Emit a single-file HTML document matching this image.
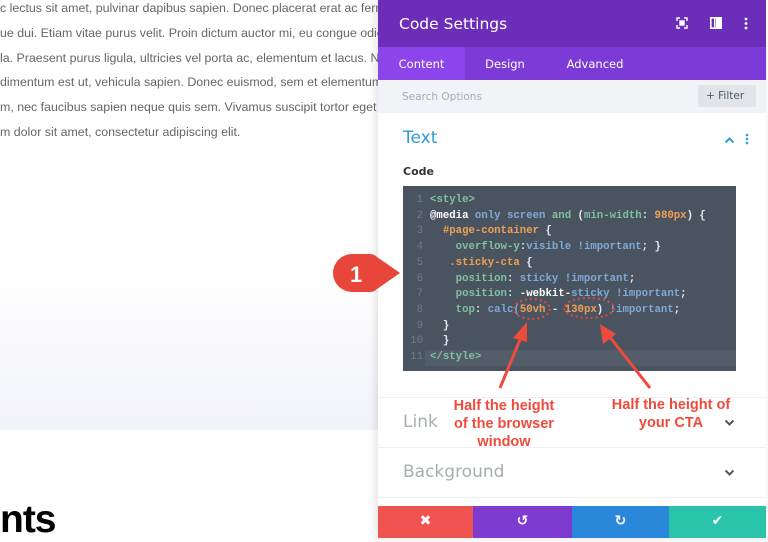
<!DOCTYPE html>
<html><head><meta charset="utf-8"><style>
*{margin:0;padding:0;box-sizing:border-box}
body{width:768px;height:538px;overflow:hidden;position:relative;background:#fff;font-family:"Liberation Sans",sans-serif}
.bg{position:absolute;left:0;top:0;width:378px;height:430px;background:linear-gradient(#fff 0,#fff 270px,#f2f3f9 430px)}
.txt{position:absolute;left:0;top:-4px;width:378px;overflow:hidden;color:#666;font-size:12.4px;line-height:24.8px;white-space:nowrap}
.nts{position:absolute;left:0;top:498px;font-size:39px;font-weight:bold;color:#000;letter-spacing:-1px}
.panel{position:absolute;left:378px;top:0;width:388px;height:538px;background:#fff;box-shadow:-2px 0 8px rgba(0,0,0,.12);font-family:"DejaVu Sans","Liberation Sans",sans-serif}
.hdr{height:47px;background:#6c2eb9;color:#fff;font-size:15.5px;padding:15px 0 0 21px}
.tabs{height:33px;background:#7c3ad6;color:#fff;font-size:11.5px;display:flex}
.tabs div{padding:10px 0 0 0;text-align:center}
.search{height:33px;background:#f1f3f6;position:relative;color:#a4acb8;font-size:10.5px;padding:11px 0 0 24px}
.filter{position:absolute;right:10px;top:5px;width:58px;height:22px;background:#e1e5ea;color:#4c5866;font-size:10.5px;padding:5px 0 0 8px}
.code{position:absolute;left:25px;top:186px;width:333px;height:185px;background:#4a5461;font-family:"Liberation Mono",monospace;font-weight:bold;font-size:10.7px;line-height:15.7px;padding-top:7px;color:#e8eaed;white-space:pre}
.code .ln{display:inline-block;width:20px;text-align:right;color:#727c88;margin-right:7px;font-weight:normal}
.g{color:#7fc0a0}.b{color:#7fa9d6}.o{color:#f0a052}.w{color:#fff}
.sec{position:absolute;left:25px;font-size:17px;color:#a7adb6}
.hr{position:absolute;left:0;width:388px;height:1px;background:#eef0f3}
.btns{position:absolute;left:0;top:506px;width:388px;height:32px;display:flex;color:#fff;font-size:14px;font-weight:bold}
.btns div{text-align:center;padding-top:7px}
.ann{position:absolute;color:#ef4b3c;font-weight:bold;font-size:14.5px;text-align:center;line-height:18px;font-family:"Liberation Sans",sans-serif}
</style></head><body>
<div class="bg"></div>
<div class="txt"><div>c lectus sit amet, pulvinar dapibus sapien. Donec placerat erat ac fermentum</div><div>ue dui. Etiam vitae purus velit. Proin dictum auctor mi, eu congue odio</div><div>la. Praesent purus ligula, ultricies vel porta ac, elementum et lacus. Nam</div><div>dimentum est ut, vehicula sapien. Donec euismod, sem et elementum</div><div>m, nec faucibus sapien neque quis sem. Vivamus suscipit tortor eget</div><div>m dolor sit amet, consectetur adipiscing elit.</div></div>
<div class="nts">nts</div>
<div class="panel">
<div class="hdr">Code Settings
<svg style="position:absolute;left:298px;top:17px" width="12" height="12" viewBox="0 0 12 12" fill="none" stroke="#fff" stroke-width="1.4"><path d="M1 4V1h3M8 1h3v3M11 8v3H8M4 11H1V8"/><rect x="4" y="4" width="4" height="4" fill="#fff"/></svg>
<svg style="position:absolute;left:332px;top:17px" width="12" height="12" viewBox="0 0 12 12"><rect x="0.8" y="0.8" width="10.4" height="10.4" fill="none" stroke="#fff" stroke-width="1.6"/><rect x="4" y="1" width="1.5" height="10" fill="#fff"/><rect x="6" y="1" width="5" height="10" fill="#fff"/></svg>
<svg style="position:absolute;left:366px;top:17px" width="4" height="13"><circle cx="2" cy="2" r="1.4" fill="#fff"/><circle cx="2" cy="6.5" r="1.4" fill="#fff"/><circle cx="2" cy="11" r="1.4" fill="#fff"/></svg>
</div>
<div class="tabs"><div style="width:87px;background:#8b45ea">Content</div><div style="width:80px">Design</div><div style="width:100px">Advanced</div></div>
<div class="search">Search Options<div class="filter">+ Filter</div></div>
<div style="position:absolute;left:25px;top:128px;font-size:17px;color:#2e9bd6">Text</div>
<svg style="position:absolute;left:346px;top:136px" width="11" height="8"><path d="M1.5 6.5L5.5 2.5L9.5 6.5" fill="none" stroke="#2e9bd6" stroke-width="2"/></svg>
<svg style="position:absolute;left:367px;top:133px" width="4" height="12"><circle cx="2" cy="2" r="1.3" fill="#2e9bd6"/><circle cx="2" cy="6" r="1.3" fill="#2e9bd6"/><circle cx="2" cy="10" r="1.3" fill="#2e9bd6"/></svg>
<div style="position:absolute;left:25px;top:165px;font-size:11px;font-weight:bold;color:#333">Code</div>
<div class="code"><div><span class="ln">1</span><span class="g">&lt;style&gt;</span></div><div><span class="ln">2</span><span class="w">@media</span> <span class="b">only screen</span> <span class="g">and</span> (<span class="g">min-width</span>: <span class="o">980px</span>) {</div><div><span class="ln">3</span>  <span class="o">#page-container</span> {</div><div><span class="ln">4</span>    <span class="g">overflow-y</span>:<span class="b">visible !important</span>; }</div><div><span class="ln">5</span>   <span class="o">.sticky-cta</span> {</div><div><span class="ln">6</span>    <span class="g">position</span>: <span class="b">sticky !important</span>;</div><div><span class="ln">7</span>    <span class="g">position</span>: <span class="w">-webkit-</span><span class="b">sticky !important</span>;</div><div><span class="ln">8</span>    <span class="g">top</span>: <span class="b">calc(</span><span class="o">50vh</span> - <span class="o">130px</span>) <span class="b">!important</span>;</div><div><span class="ln">9</span>  }</div><div><span class="ln">10</span>  }</div><div style="display:flex"><span class="ln" style="margin-right:2px">11</span><span style="flex:1;background:#545e6b;padding-left:5px"><span class="g">&lt;/style&gt;</span></span></div></div>
<svg style="position:absolute;left:132px;top:295px" width="110" height="30"><ellipse cx="22" cy="14" rx="18" ry="10" fill="none" stroke="#e0483b" stroke-width="2" stroke-dasharray="2 3"/><ellipse cx="79" cy="13" rx="25" ry="10" fill="none" stroke="#e0483b" stroke-width="2" stroke-dasharray="2 3"/></svg>
<div class="hr" style="top:397px"></div>
<div class="sec" style="top:412px">Link</div>
<svg style="position:absolute;left:346px;top:419px" width="11" height="8"><path d="M1.5 1.5L5.5 5.5L9.5 1.5" fill="none" stroke="#4c5866" stroke-width="2"/></svg>
<div class="hr" style="top:447px"></div>
<div class="sec" style="top:462px">Background</div>
<svg style="position:absolute;left:346px;top:469px" width="11" height="8"><path d="M1.5 1.5L5.5 5.5L9.5 1.5" fill="none" stroke="#4c5866" stroke-width="2"/></svg>
<div class="hr" style="top:497px"></div>
<div class="btns"><div style="width:95px;background:#ef5350">✖</div><div style="width:99px;background:#7e3bd0">↺</div><div style="width:97px;background:#2b87da">↻</div><div style="width:97px;background:#29c4a9">✔</div></div>
</div>
<div class="ann" style="left:444px;top:397px;width:120px">Half the height<br>of the browser<br>window</div>
<div class="ann" style="left:605px;top:396px;width:132px">Half the height of<br>your CTA</div>
<svg style="position:absolute;left:0;top:0" width="768" height="538">
<g stroke="#ef4b3c" stroke-width="3" fill="#ef4b3c">
<line x1="500" y1="388" x2="522" y2="335"/><polygon points="527,322 513,338 527,342" stroke="none"/>
<line x1="650" y1="388" x2="609" y2="336"/><polygon points="600,324 603,344 616,334" stroke="none"/>
</g>
<path d="M352 254 h18 a10 10 0 0 1 7 3 l23 16 l-23 16 a10 10 0 0 1 -7 3 h-18 a19 19 0 0 1 0 -38z" fill="#e8463a"/>
<text x="350" y="282" font-family="Liberation Sans,sans-serif" font-size="22" font-weight="bold" fill="#fff">1</text>
</svg>
</body></html>
